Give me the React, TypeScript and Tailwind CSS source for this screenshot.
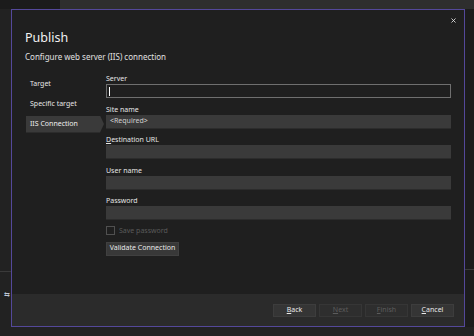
import { X } from "lucide-react";

const font = { fontFamily: '"Noto Sans", "Open Sans", sans-serif' };

function Field({ label, value, focused }: { label: React.ReactNode; value?: string; focused?: boolean }) {
  return (
    <div className="flex flex-col">
      <div className="h-[11px] text-[7px] leading-[11px] text-[#e6e6e6]">{label}</div>
      {focused ? (
        <div className="h-[14px] border border-[#6f6f6f] bg-[#1f1f1f] flex items-center pl-[2px]">
          <div className="w-px h-[9px] bg-white" />
        </div>
      ) : (
        <div className="h-[14px] bg-[#3a3a3a] border-b border-[#2c2c2c] flex items-center pl-[4px] text-[7px] text-[#cfcfcf]">
          {value}
        </div>
      )}
    </div>
  );
}

function FooterButton({ children, disabled }: { children: React.ReactNode; disabled?: boolean }) {
  return (
    <div
      className={
        "w-[43px] h-[13px] flex items-center justify-center text-[7px] border " +
        (disabled ? "bg-[#2e2e2e] border-[#363636] text-[#5c5c5c]" : "bg-[#353535] border-[#3d3d3d] text-[#e8e8e8]")
      }
    >
      {children}
    </div>
  );
}

export default function App() {
  return (
    <div className="w-[474px] h-[336px] bg-[#232323] flex flex-col overflow-hidden" style={font}>
      <div className="h-[9px] flex">
        <div className="w-[60px] bg-[#1b1b1b]" />
        <div className="flex-1 bg-[#2e2e2e]" />
      </div>
      <div className="flex h-[318px]">
        <div className="w-[11px] bg-[#222222] flex flex-col">
          <div className="h-[262px]" />
          <div className="h-px bg-[#3a3a3a]" />
          <div className="h-[19px]" />
          <div className="text-[7px] leading-none text-[#bfc6d6] pl-[4px]">⇆</div>
        </div>
        <div className="w-[454px] border border-[#54489a] bg-[#1f1f1f] flex flex-col">
          <div className="h-[19px] flex justify-end items-center pr-[7px] pt-[1px]">
            <X className="w-[7px] h-[7px] text-[#e0e0e0]" strokeWidth={3} />
          </div>
          <div className="pl-[13px] text-[12.5px] leading-[17px] text-[#f2f2f2]">Publish</div>
          <div className="pl-[13px] mt-[5px] text-[8px] leading-[12px] text-[#e0e0e0]">
            Configure web server (IIS) connection
          </div>
          <div className="flex mt-[10px] flex-1">
            <div className="w-[80px] pl-[14px] pt-[2.5px] flex flex-col gap-[3px]">
              <div className="h-[17px] pl-[4px] flex items-center text-[7px] text-[#e6e6e6]">Target</div>
              <div className="h-[17px] pl-[4px] flex items-center text-[7px] text-[#e6e6e6]">Specific target</div>
              <div className="h-[17px] pl-[4px] w-[78px] flex items-center text-[7px] text-[#f0f0f0] bg-[#3a3a3a] [clip-path:polygon(0_0,calc(100%-4px)_0,100%_50%,calc(100%-4px)_100%,0_100%)]">
                IIS Connection
              </div>
            </div>
            <div className="ml-[14px] w-[345px] flex flex-col gap-[5.5px]">
              <Field label="Server" focused />
              <Field label="Site name" value="<Required>" />
              <Field label={<><span className="underline">D</span>estination URL</>} />
              <Field label="User name" />
              <Field label="Password" />
              <div className="flex items-center gap-[4px]">
                <div className="w-[9px] h-[9px] border border-[#505050]" />
                <span className="text-[7px] text-[#5a5a5a]">Save password</span>
              </div>
              <div className="w-[73px] h-[14px] bg-[#383838] border border-[#404040] flex items-center justify-center text-[7px] text-[#e8e8e8]">
                Validate Connection
              </div>
            </div>
          </div>
          <div className="h-[32px] bg-[#2b2b2b] flex items-center justify-end gap-[3px] pr-[10px]">
            <FooterButton><span className="underline">B</span>ack</FooterButton>
            <FooterButton disabled><span className="underline">N</span>ext</FooterButton>
            <FooterButton disabled><span className="underline">F</span>inish</FooterButton>
            <FooterButton><span className="underline">C</span>ancel</FooterButton>
          </div>
        </div>
        <div className="flex-1 bg-[#1c1c1c] flex flex-col">
          <div className="h-[260px]" />
          <div className="h-px bg-[#3a3a3a]" />
        </div>
      </div>
      <div className="flex-1 bg-[#222222]" />
    </div>
  );
}
